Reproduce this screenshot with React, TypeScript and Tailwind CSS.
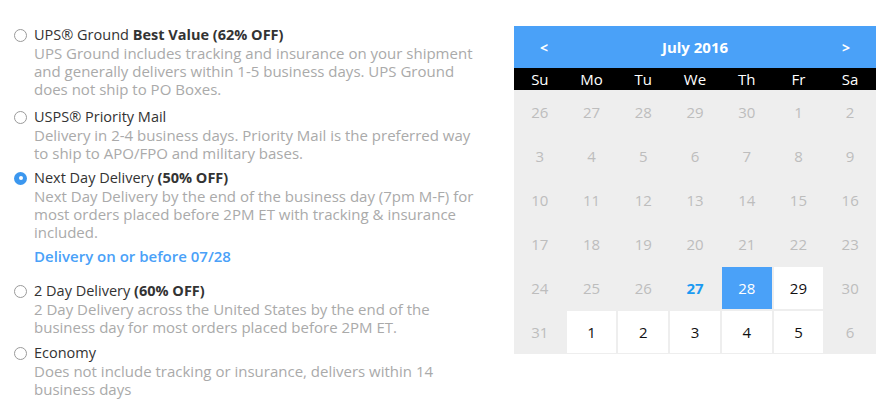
import React from "react";

type Option = {
  name: string;
  badge?: string;
  desc: string[];
  selected?: boolean;
  note?: string;
  mt: string;
};

const options: Option[] = [
  {
    name: "UPS® Ground",
    badge: "Best Value (62% OFF)",
    desc: [
      "UPS Ground includes tracking and insurance on your shipment",
      "and generally delivers within 1-5 business days. UPS Ground",
      "does not ship to PO Boxes.",
    ],
    mt: "mt-0",
  },
  {
    name: "USPS® Priority Mail",
    desc: [
      "Delivery in 2-4 business days. Priority Mail is the preferred way",
      "to ship to APO/FPO and military bases.",
    ],
    mt: "mt-[10px]",
  },
  {
    name: "Next Day Delivery",
    badge: "(50% OFF)",
    desc: [
      "Next Day Delivery by the end of the business day (7pm M-F) for",
      "most orders placed before 2PM ET with tracking & insurance",
      "included.",
    ],
    selected: true,
    note: "Delivery on or before 07/28",
    mt: "mt-[7px]",
  },
  {
    name: "2 Day Delivery",
    badge: "(60% OFF)",
    desc: [
      "2 Day Delivery across the United States by the end of the",
      "business day for most orders placed before 2PM ET.",
    ],
    mt: "mt-[17px]",
  },
  {
    name: "Economy",
    desc: [
      "Does not include tracking or insurance, delivers within 14",
      "business days",
    ],
    mt: "mt-[8px]",
  },
];

function Radio({ on }: { on?: boolean }) {
  if (on) {
    return (
      <span className="mt-[2.5px] flex h-[13px] w-[13px] shrink-0 items-center justify-center rounded-full bg-[#3b97ef]">
        <span className="h-[4px] w-[4px] rounded-full bg-white" />
      </span>
    );
  }
  return <span className="mt-[2.5px] h-[13px] w-[13px] shrink-0 rounded-full border border-[#9a9a9a] bg-white" />;
}

type Day = { n: number; kind: "off" | "open" | "today" | "sel" };

function buildDays(): Day[] {
  const days: Day[] = [];
  [26, 27, 28, 29, 30].forEach((n) => days.push({ n, kind: "off" }));
  for (let n = 1; n <= 31; n++) {
    let kind: Day["kind"] = "off";
    if (n === 27) kind = "today";
    else if (n === 28) kind = "sel";
    else if (n === 29) kind = "open";
    days.push({ n, kind });
  }
  [1, 2, 3, 4, 5].forEach((n) => days.push({ n, kind: "open" }));
  days.push({ n: 6, kind: "off" });
  return days;
}

const cellStyle: Record<Day["kind"], string> = {
  off: "text-[#bdbdbd]",
  open: "bg-white text-[#111]",
  today: "font-bold text-[#1a9af2]",
  sel: "bg-[#4aa1f8] text-white",
};

function Calendar() {
  const week = ["Su", "Mo", "Tu", "We", "Th", "Fr", "Sa"];
  return (
    <div className="w-[362px] shrink-0 self-start bg-[#eeeeee]">
      <div className="flex h-[42px] items-center justify-between bg-[#4aa1f8] px-[26px] font-bold text-white">
        <span className="text-[14px]">&lt;</span>
        <span className="text-[15px]">July 2016</span>
        <span className="text-[14px]">&gt;</span>
      </div>
      <div className="grid h-[22px] grid-cols-7 bg-black text-[15px] leading-[22px] text-white">
        {week.map((w) => (
          <span key={w} className="text-center">
            {w}
          </span>
        ))}
      </div>
      <div className="grid grid-cols-7 gap-[2px] px-[1px] py-[1px]">
        {buildDays().map((d, i) => (
          <div
            key={i}
            className={`flex h-[42px] items-center justify-center text-[15px] ${cellStyle[d.kind]}`}
          >
            {d.n}
          </div>
        ))}
      </div>
    </div>
  );
}

export default function App() {
  return (
    <div
      className="flex h-[415px] w-[888px] justify-between bg-white pl-[14px] pr-[12px] pt-[26px]"
      style={{ fontFamily: '"Open Sans", sans-serif' }}
    >
      <div className="flex flex-col">
        {options.map((o) => (
          <div key={o.name} className={o.mt}>
            <div className="flex gap-[7px]">
              <Radio on={o.selected} />
              <div className="leading-[18px]">
                <div className="text-[14.5px] text-[#333]">
                  {o.name}
                  {o.badge && <span className="font-bold"> {o.badge}</span>}
                </div>
                {o.desc.map((line) => (
                  <div key={line} className="text-[15px] text-[#aaaaaa]">
                    {line}
                  </div>
                ))}
              </div>
            </div>
            {o.note && (
              <div className="mt-[6px] pl-[20px] text-[15px] font-semibold leading-[18px] text-[#4aa1f8]">
                {o.note}
              </div>
            )}
          </div>
        ))}
      </div>
      <Calendar />
    </div>
  );
}
